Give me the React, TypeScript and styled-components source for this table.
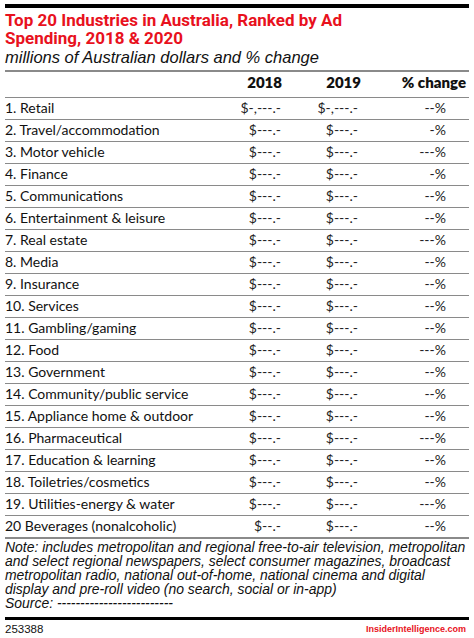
import React from "react";
import styled, { createGlobalStyle } from "styled-components";

const Global = createGlobalStyle`
  html, body { margin: 0; padding: 0; background: #fff; }
  body { width: 474px; height: 638px; overflow: hidden; }
  * { box-sizing: border-box; }
`;

const Page = styled.div`
  padding: 4px 5px 0 5px;
  width: 474px;
  display: flex;
  flex-direction: column;
  color: #111;
`;

const TopBar = styled.div`
  height: 4px;
  background: #000;
`;

const Title = styled.h1`
  margin: 3px 0 0 0;
  font-family: "Roboto", "Open Sans", sans-serif;
  font-weight: 700;
  font-size: 17px;
  line-height: 18px;
  color: #e8111d;
`;

const Subtitle = styled.div`
  margin-top: 1px;
  font-family: "Liberation Sans", Arial, sans-serif;
  font-style: italic;
  font-size: 16.5px;
  line-height: 19px;
  height: 24px;
  border-bottom: 2px solid #8a8a8a;
`;

const Table = styled.div`
  display: flex;
  flex-direction: column;
`;

const Row = styled.div<{ $head?: boolean; $last?: boolean }>`
  display: grid;
  grid-template-columns: 1fr 72px 77px 88px;
  align-items: start;
  height: ${(p) => (p.$head ? 26 : p.$last ? 23 : 22)}px;
  border-bottom: ${(p) => (p.$last ? 2 : 1)}px solid #8a8a8a;
`;

const HeadCell = styled.div<{ $pr: number }>`
  font-family: "Lato", "Open Sans", sans-serif;
  font-weight: 800;
  font-size: 15px;
  line-height: 18px;
  text-align: right;
  padding-right: ${(p) => p.$pr}px;
  padding-top: 1px;
`;

const Label = styled.div`
  font-family: "Lato", "Open Sans", sans-serif;
  font-size: 14px;
  line-height: 17px;
  white-space: nowrap;
  padding-top: 1px;
`;

const Val = styled.div<{ $pr: number }>`
  font-family: "Lato", "Open Sans", sans-serif;
  font-size: 14px;
  line-height: 17px;
  text-align: right;
  padding-top: 1px;
  padding-right: ${(p) => p.$pr}px;
  color: #222;
`;

const Note = styled.div`
  margin-top: 1px;
  font-family: "Liberation Sans", Arial, sans-serif;
  font-style: italic;
  font-size: 13.95px;
  line-height: 14px;
  white-space: nowrap;
`;

const BottomBar = styled.div`
  margin-top: 7px;
  height: 3px;
  background: #000;
`;

const Footer = styled.div`
  display: flex;
  justify-content: space-between;
  align-items: center;
  padding: 1px 3px 0 0;
  height: 17px;
  font-family: "Liberation Sans", Arial, sans-serif;
  font-size: 11.5px;
`;

const Brand = styled.span`
  color: #e8111d;
  font-weight: 700;
  font-size: 9px;
`;

const rows: [string, string, string, string][] = [
  ["1. Retail", "$-,---.-", "$-,---.-", "--%"],
  ["2. Travel/accommodation", "$---.-", "$---.-", "-%"],
  ["3. Motor vehicle", "$---.-", "$---.-", "---%"],
  ["4. Finance", "$---.-", "$---.-", "-%"],
  ["5. Communications", "$---.-", "$---.-", "--%"],
  ["6. Entertainment & leisure", "$---.-", "$---.-", "--%"],
  ["7. Real estate", "$---.-", "$---.-", "---%"],
  ["8. Media", "$---.-", "$---.-", "--%"],
  ["9. Insurance", "$---.-", "$---.-", "--%"],
  ["10. Services", "$---.-", "$---.-", "--%"],
  ["11. Gambling/gaming", "$---.-", "$---.-", "--%"],
  ["12. Food", "$---.-", "$---.-", "---%"],
  ["13. Government", "$---.-", "$---.-", "--%"],
  ["14. Community/public service", "$---.-", "$---.-", "--%"],
  ["15. Appliance home & outdoor", "$---.-", "$---.-", "--%"],
  ["16. Pharmaceutical", "$---.-", "$---.-", "---%"],
  ["17. Education & learning", "$---.-", "$---.-", "--%"],
  ["18. Toiletries/cosmetics", "$---.-", "$---.-", "--%"],
  ["19. Utilities-energy & water", "$---.-", "$---.-", "---%"],
  ["20 Beverages (nonalcoholic)", "$--.-", "$---.-", "--%"],
];

export default function App() {
  return (
    <>
      <Global />
      <Page>
        <TopBar />
        <Title>
          Top 20 Industries in Australia, Ranked by Ad
          <br />
          Spending, 2018 &amp; 2020
        </Title>
        <Subtitle>millions of Australian dollars and % change</Subtitle>
        <Table>
          <Row $head>
            <div />
            <HeadCell $pr={22}>2018</HeadCell>
            <HeadCell $pr={20}>2019</HeadCell>
            <HeadCell $pr={3}>% change</HeadCell>
          </Row>
          {rows.map((r, i) => (
            <Row key={i} $last={i === rows.length - 1}>
              <Label>{r[0]}</Label>
              <Val $pr={23}>{r[1]}</Val>
              <Val $pr={23}>{r[2]}</Val>
              <Val $pr={23}>{r[3]}</Val>
            </Row>
          ))}
        </Table>
        <Note>
          Note: includes metropolitan and regional free-to-air television, metropolitan
          <br />
          and select regional newspapers, select consumer magazines, broadcast
          <br />
          metropolitan radio, national out-of-home, national cinema and digital
          <br />
          display and pre-roll video (no search, social or in-app)
          <br />
          Source: -------------------------
        </Note>
        <BottomBar />
        <Footer>
          <span>253388</span>
          <Brand>InsiderIntelligence.com</Brand>
        </Footer>
      </Page>
    </>
  );
}
